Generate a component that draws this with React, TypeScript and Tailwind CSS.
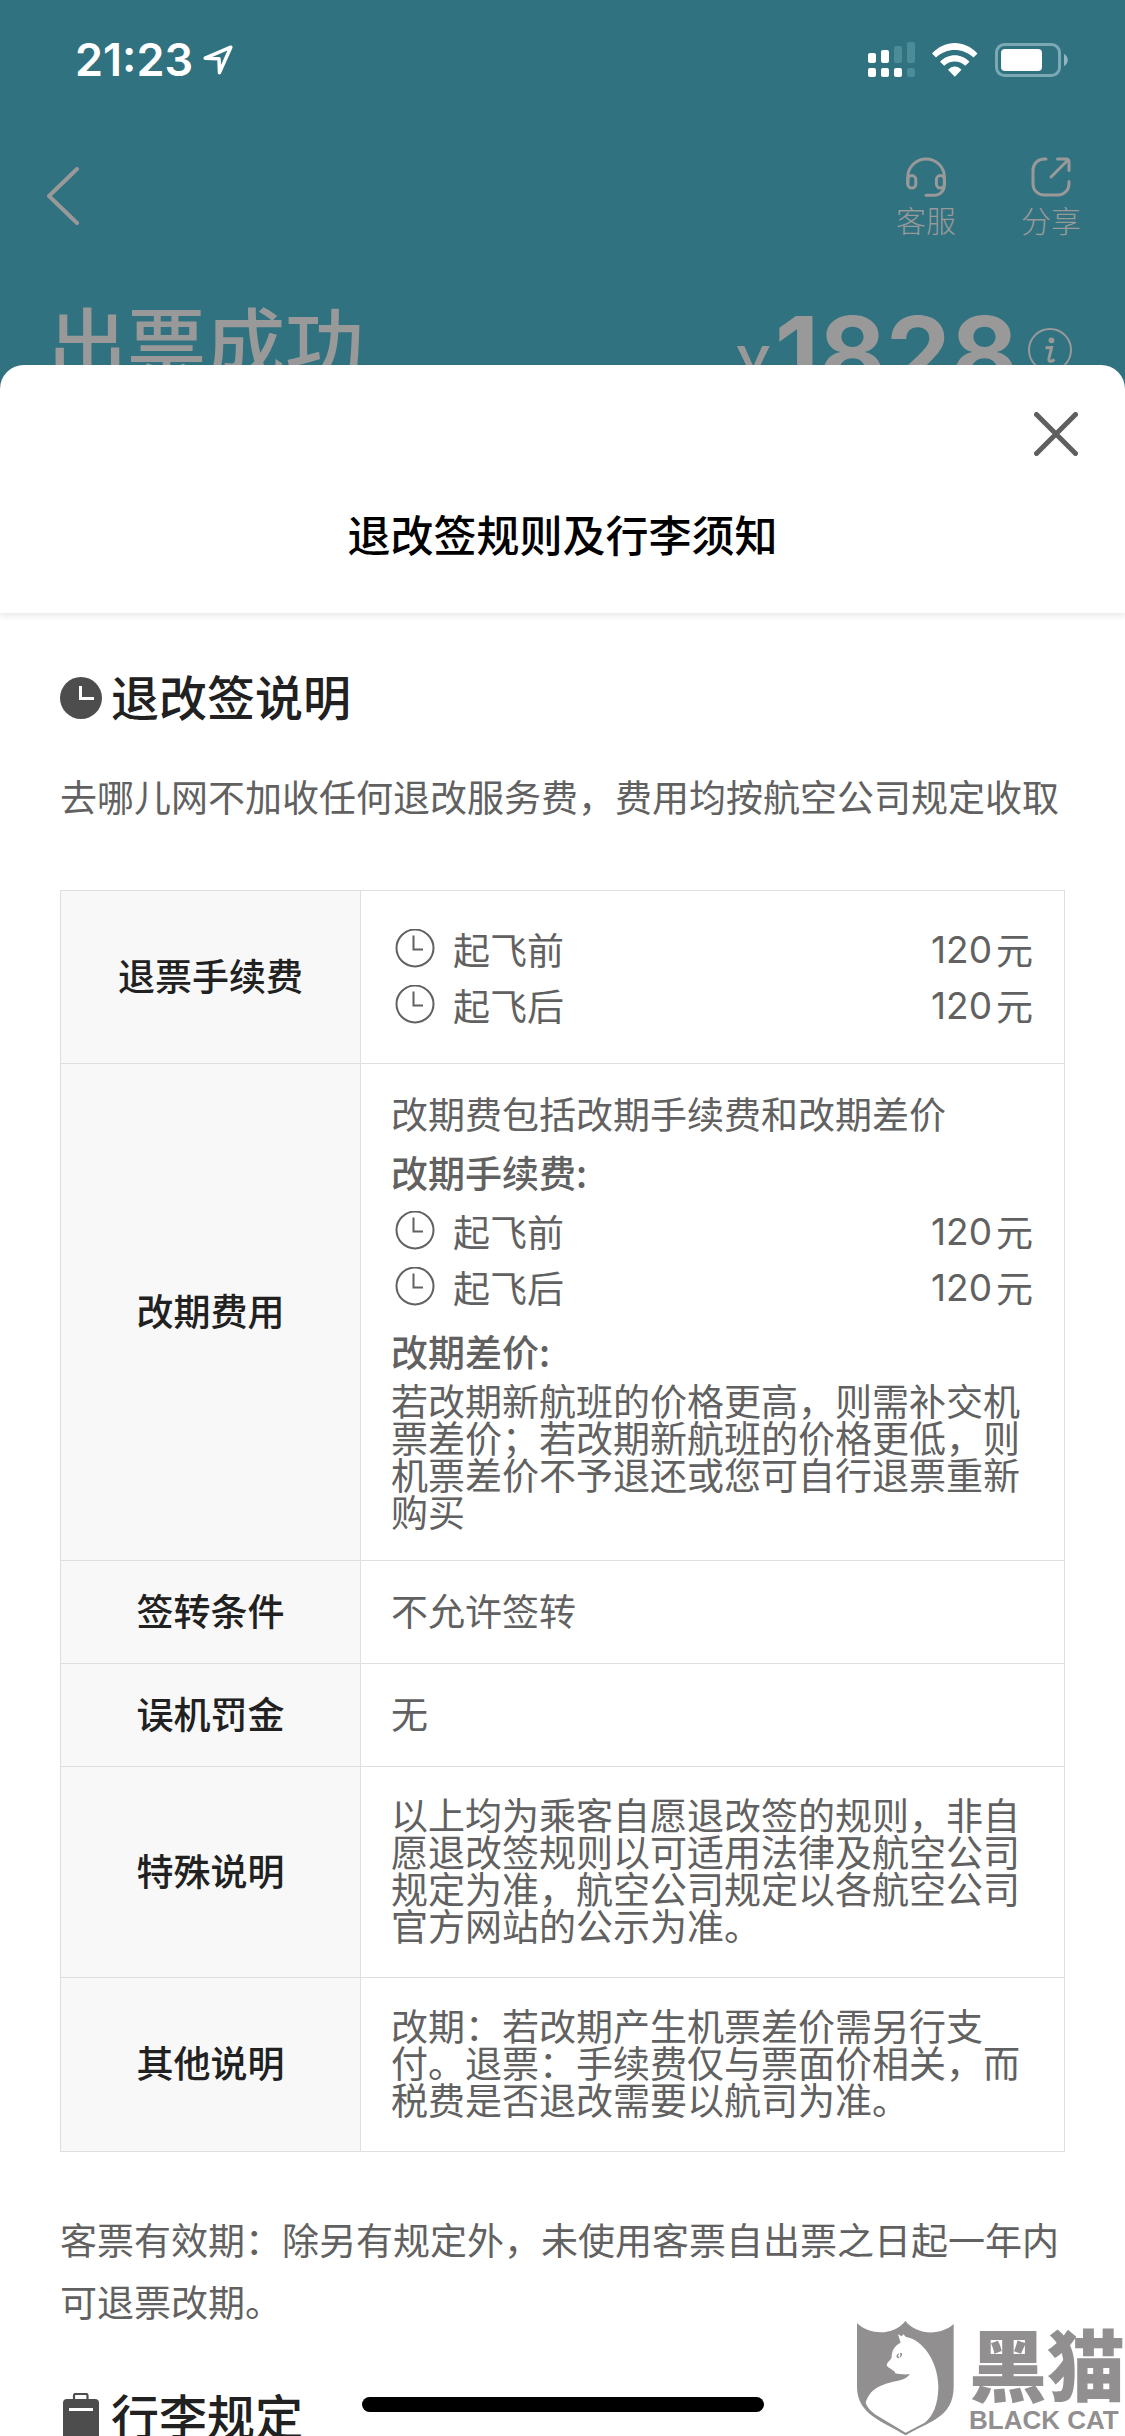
import type { ReactNode } from 'react';

function LocationIcon() {
  return (
    <svg className="w-[30px] h-[30px]" viewBox="0 0 30 30" fill="none" stroke="currentColor" strokeWidth="3.5" strokeLinejoin="round">
      <path d="M2.2 13.2 27.8 2.2 16.5 27.6 16 13.8Z" />
    </svg>
  );
}

function SignalIcon() {
  return (
    <svg className="w-[47px] h-9" viewBox="0 0 47 36" fill="#fff">
      <rect x="0" y="11" width="8" height="10" rx="2" />
      <rect x="13" y="8" width="8" height="13" rx="2" />
      <rect x="26" y="4" width="8" height="17" rx="2" fill="#4c8c99" />
      <rect x="39" y="0" width="8" height="21" rx="2" fill="#4c8c99" />
      <rect x="0" y="26" width="8" height="9" rx="2" />
      <rect x="13" y="26" width="8" height="9" rx="2" />
      <rect x="26" y="26" width="8" height="9" rx="2" />
      <rect x="39" y="26" width="8" height="9" rx="2" fill="#4c8c99" />
    </svg>
  );
}

function WifiIcon() {
  return (
    <svg className="w-[46px] h-[34px]" viewBox="0 0 46 34" fill="#fff">
      <path d="M0 10.5C13-3.5 32.5-3.5 45.5 10.5L41.5 14.5C31 4.5 14.5 4.5 4 14.5Z" />
      <path d="M8 18.8C16 10 29.5 10 37.5 18.8L33.3 22.8C27.5 17 18 17 12.2 22.8Z" />
      <path d="M16 26.8C20 22.3 25.5 22.3 29.5 26.8L22.8 33.7Z" />
    </svg>
  );
}

function BatteryIcon() {
  return (
    <svg className="w-[74px] h-[34px]" viewBox="0 0 74 34" fill="none">
      <rect x="1.5" y="1.5" width="63" height="31" rx="8" stroke="#7aa9b3" strokeWidth="3" />
      <rect x="6" y="6" width="41" height="22" rx="4" fill="#fff" />
      <path d="M69 11c5 2 5 10 0 12Z" fill="#8fb7bf" />
    </svg>
  );
}

function BackIcon() {
  return (
    <svg className="w-9 h-[60px]" viewBox="0 0 36 60" fill="none" stroke="currentColor" strokeWidth="4" strokeLinecap="round" strokeLinejoin="round">
      <path d="M33 2 5 29 33 56" />
    </svg>
  );
}

function HeadsetIcon() {
  return (
    <svg className="w-10 h-10" viewBox="0 0 40 40" fill="none" stroke="currentColor" strokeWidth="3" strokeLinecap="round">
      <path d="M1.8 27V20.2A18.3 18.3 0 0 1 38.4 20.2V28A10 10 0 0 1 28.4 38.2H20" />
      <rect x="1.8" y="18.6" width="8" height="12.4" rx="4" />
      <rect x="30.4" y="18.6" width="8" height="12.4" rx="4" />
    </svg>
  );
}

function ShareIcon() {
  return (
    <svg className="w-10 h-10" viewBox="0 0 40 40" fill="none" stroke="currentColor" strokeWidth="3" strokeLinecap="round" strokeLinejoin="round">
      <path d="M15 2H13A11 11 0 0 0 2 13V27A11 11 0 0 0 13 38H27A11 11 0 0 0 38 27V24.5" />
      <path d="M26.5 2H35Q38 2 38 5V13.5M36.5 3.5 20 20" />
    </svg>
  );
}

function InfoIcon() {
  return (
    <svg className="w-11 h-11" viewBox="0 0 44 44" fill="none" stroke="currentColor">
      <circle cx="22" cy="22" r="21" strokeWidth="2" />
      <circle cx="23.5" cy="12.3" r="2.9" fill="currentColor" stroke="none" />
      <path d="M17.5 19.8Q20.5 19.6 23.6 19.6L20.9 30.5Q20.4 33.6 23 33.2 25 32.8 26.4 31.4" strokeWidth="3" />
    </svg>
  );
}

function CloseIcon() {
  return (
    <svg className="w-11 h-11" viewBox="0 0 44 44" fill="none" stroke="#5f5f5f" strokeWidth="5" strokeLinecap="round">
      <path d="M2.5 2.5 41.5 41.5M41.5 2.5 2.5 41.5" />
    </svg>
  );
}

function ClockSolidIcon() {
  return (
    <svg className="w-[42px] h-[42px]" viewBox="0 0 42 42" fill="none">
      <circle cx="21" cy="21" r="21" fill="#4d4d4d" />
      <path d="M20.5 9V21.5H34" stroke="#fff" strokeWidth="3" />
    </svg>
  );
}

function ClockIcon() {
  return (
    <svg className="w-10 h-10 shrink-0" viewBox="0 0 40 40" fill="none" stroke="#616161" strokeWidth="2">
      <circle cx="20" cy="19" r="18.5" />
      <path d="M18.5 6.5V20.5H28" />
    </svg>
  );
}

function SuitcaseIcon() {
  return (
    <svg className="w-[42px] h-12" viewBox="0 0 42 48" fill="#4d4d4d">
      <path d="M14 7V2.5Q14 1 15.5 1H26Q27.5 1 27.5 2.5V7" fill="none" stroke="#4d4d4d" strokeWidth="2.2" />
      <rect x="3" y="6" width="36" height="42" rx="4" />
      <rect x="9" y="15" width="24" height="3" fill="#fff" />
    </svg>
  );
}

function CatShield() {
  return (
    <svg className="w-[99px] h-[116px] shrink-0" viewBox="106 90 297 348" fill="#918f90">
      <path d="M109 100C150 137 220 137 254 93C290 137 360 137 399 102V290C399 385 320 395 255 436C190 395 109 375 109 290Z" />
      <path
        d="M240 158L232 133L243 139L248 133L256 141C305 148 353 215 353 290C353 345 335 380 312 398L255 428L170 377C150 364 140 352 135 338C150 290 190 282 238 271C252 267 260 262 268 253C250 254 235 253 224 250C222 240 203 236 198 226C198 216 211 212 213 200C214 178 224 166 240 158Z"
        fill="#fff"
      />
      <path d="M227 200Q228 191 236 189Q230 197 236 205Q230 205 227 200Z" />
      <path d="M238 188L244 190Q245 200 236 205Q241 196 238 188Z" />
    </svg>
  );
}

const beforeAfter = [
  { label: '起飞前', price: '120' },
  { label: '起飞后', price: '120' },
];

function FeeList() {
  return (
    <ul>
      {beforeAfter.map((f) => (
        <li key={f.label} className="flex items-center h-14 pl-1">
          <ClockIcon />
          <span className="ml-[18px] flex-1">{f.label}</span>
          <span className="font-[Inter,sans-serif]">{f.price}</span>
          <span className="ml-1">元</span>
        </li>
      ))}
    </ul>
  );
}

const rows: { title: string; content: ReactNode; hasFees?: boolean }[] = [
  { title: '退票手续费', content: <FeeList />, hasFees: true },
  {
    title: '改期费用',
    hasFees: true,
    content: (
      <>
        <p className="leading-[38px] mb-3">改期费包括改期手续费和改期差价</p>
        <h3 className="font-medium leading-[56px] mb-[3px]">改期手续费:</h3>
        <FeeList />
        <h3 className="font-medium leading-[56px] mt-2 mb-[3px]">改期差价:</h3>
        <p>若改期新航班的价格更高，则需补交机票差价；若改期新航班的价格更低，则机票差价不予退还或您可自行退票重新购买</p>
      </>
    ),
  },
  { title: '签转条件', content: '不允许签转' },
  { title: '误机罚金', content: '无' },
  { title: '特殊说明', content: '以上均为乘客自愿退改签的规则，非自愿退改签规则以可适用法律及航空公司规定为准，航空公司规定以各航空公司官方网站的公示为准。' },
  { title: '其他说明', content: '改期：若改期产生机票差价需另行支付。退票：手续费仅与票面价相关，而税费是否退改需要以航司为准。' },
];

function SectionTitle({ icon, children }: { icon: ReactNode; children: ReactNode }) {
  return (
    <h2 className="flex items-center text-5xl leading-[64px] font-medium text-[#212121]">
      <span className="w-[51px]">{icon}</span>
      <span className="pb-[6px]">{children}</span>
    </h2>
  );
}

export default function App() {
  return (
    <div className="relative h-screen overflow-hidden flex flex-col bg-[#307280] font-['Noto_Sans_CJK_SC',sans-serif]">
      {/* Status bar */}
      <div className="flex items-center justify-between py-9 pl-[75px] pr-14 text-white">
        <div className="flex items-center gap-[10px]">
          <span className="font-[Inter,sans-serif] text-[45px] leading-[48px] font-semibold">21:23</span>
          <LocationIcon />
        </div>
        <div className="flex items-center gap-[17px]">
          <SignalIcon />
          <WifiIcon />
          <BatteryIcon />
        </div>
      </div>

      {/* Order header, dimmed behind the sheet */}
      <header className="text-[#999]">
        <div className="flex items-center justify-between pt-[37px] px-11">
          <button aria-label="返回">
            <BackIcon />
          </button>
          <div className="flex gap-[65px] text-[30px] leading-9 font-light">
            <button className="flex flex-col items-center gap-1">
              <HeadsetIcon />
              客服
            </button>
            <button className="flex flex-col items-center gap-1">
              <ShareIcon />
              分享
            </button>
          </div>
        </div>
        <div className="flex justify-between mt-[60px] pl-12 pr-[53px] h-24">
          <span className="text-[79px] leading-[88px] font-medium">出票成功</span>
          <div className="flex items-start gap-[10px]">
            <div className="flex items-baseline gap-1 font-[Inter,sans-serif] leading-[114px]">
              <span className="text-[62px] font-medium">¥</span>
              <span className="text-[103px] font-bold">1828</span>
            </div>
            <div className="pt-[31px]">
              <InfoIcon />
            </div>
          </div>
        </div>
      </header>

      {/* Rules sheet */}
      <main className="relative flex-1 min-h-0 -mt-7 overflow-hidden rounded-t-3xl bg-white text-[37px] leading-[37px] text-[#616161]">
        <div className="pt-[47px] pb-[50px] shadow-[0_3px_6px_rgba(0,0,0,0.09)]">
          <div className="flex justify-end pr-[47px]">
            <button aria-label="关闭">
              <CloseIcon />
            </button>
          </div>
          <h1 className="mt-[47px] text-center text-[43px] leading-[60px] font-medium text-black">退改签规则及行李须知</h1>
        </div>

        <div className="px-[60px] pt-[50px]">
          <SectionTitle icon={<ClockSolidIcon />}>退改签说明</SectionTitle>
          <p className="mt-8 leading-[62px]">去哪儿网不加收任何退改服务费，费用均按航空公司规定收取</p>

          <table className="w-full mt-[63px] border-collapse">
            <tbody>
              {rows.map((r) => (
                <tr key={r.title} className="h-[103px]">
                  <th className="w-[300px] pb-1 border border-[#dfdfdf] bg-[#f8f8f8] font-medium text-[#212121]">{r.title}</th>
                  <td className={`border border-[#dfdfdf] pl-[30px] pr-[31px] ${r.hasFees ? 'py-[30px]' : 'pt-[29px] pb-[33px]'}`}>{r.content}</td>
                </tr>
              ))}
            </tbody>
          </table>

          <p className="mt-14 mb-[50px] leading-[62px]">客票有效期：除另有规定外，未使用客票自出票之日起一年内可退票改期。</p>
          <SectionTitle icon={<SuitcaseIcon />}>行李规定</SectionTitle>
        </div>
      </main>

      {/* Home indicator */}
      <div className="absolute bottom-6 left-1/2 -translate-x-1/2 w-[402px] h-[15px] rounded-full bg-black" />

      {/* Watermark */}
      <div className="absolute right-0 bottom-0 flex items-end gap-[14px] text-[#918f90]">
        <CatShield />
        <div className="flex flex-col">
          <span className="text-[78px] leading-[84px] font-black">黑猫</span>
          <span className="font-['Liberation_Sans',sans-serif] text-[26px] leading-8 font-bold">BLACK CAT</span>
        </div>
      </div>
    </div>
  );
}
